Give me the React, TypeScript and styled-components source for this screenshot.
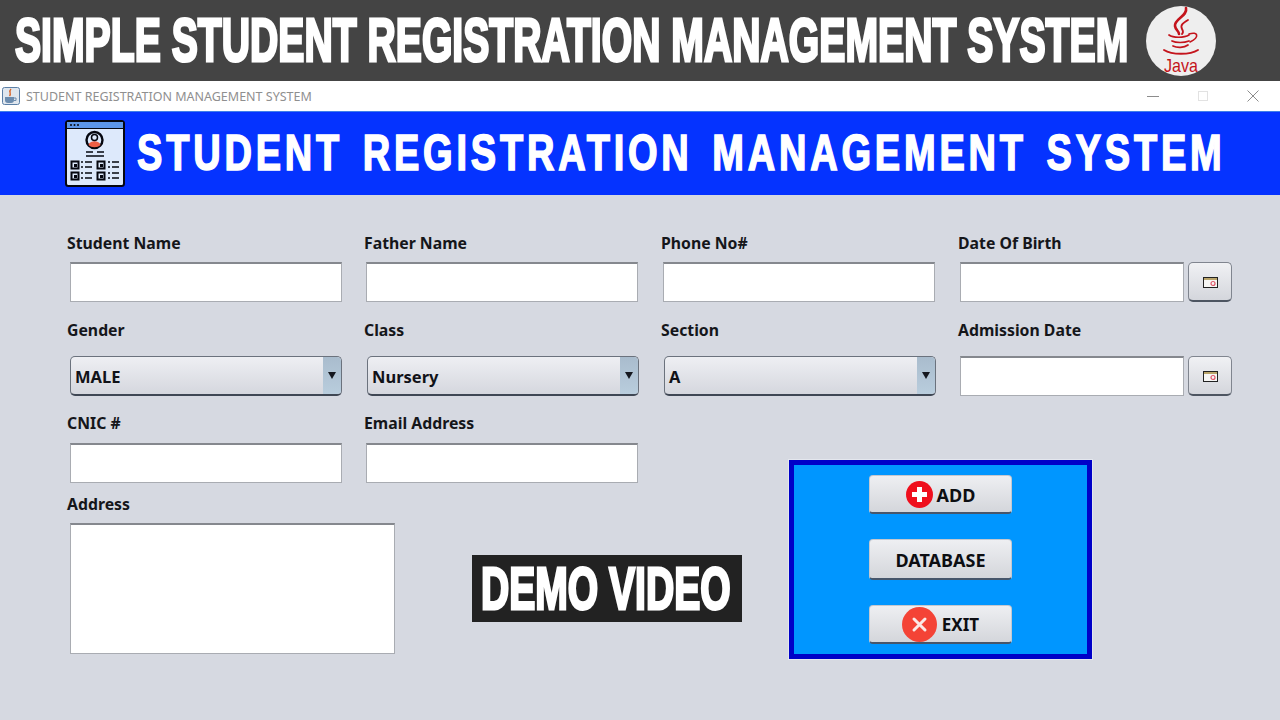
import styled, { createGlobalStyle } from 'styled-components';

const GlobalStyle = createGlobalStyle`
  html, body {
    margin: 0;
    padding: 0;
    background: #d6d9e1;
  }
  * {
    box-sizing: border-box;
  }
`;

const Page = styled.div`
  width: 1280px;
  height: 720px;
  overflow: hidden;
  display: flex;
  flex-direction: column;
  background: #d6d9e1;
  font-family: 'Noto Sans', 'Open Sans', sans-serif;
`;

const Banner = styled.header`
  height: 81px;
  flex: none;
  background: #444444;
  display: flex;
  align-items: center;
  padding-left: 15px;
  gap: 15px;
`;

const BannerTitle = styled.h1`
  margin: 0;
  width: 1116px;
  height: 81px;
  flex: none;
  font-family: 'Liberation Sans', sans-serif;
  font-size: 61px;
  line-height: 81px;
  font-weight: 700;
  color: #ffffff;
  white-space: nowrap;
  -webkit-text-stroke: 3px #ffffff;
`;

const Squeezed = styled.span<{ $scale: number }>`
  display: inline-block;
  transform: scaleX(${({ $scale }) => $scale});
  transform-origin: left center;
`;

const TitleBar = styled.div`
  height: 30px;
  flex: none;
  background: #ffffff;
  display: flex;
  align-items: center;
  padding-left: 2px;
`;

const WindowTitle = styled.span`
  margin-left: 6px;
  font-size: 12.5px;
  color: #8f8f8f;
  white-space: nowrap;
  flex: 1;
`;

const WindowControl = styled.span<{ $faded?: boolean }>`
  width: 50px;
  height: 30px;
  display: flex;
  align-items: center;
  justify-content: center;
  color: ${({ $faded }) => ($faded ? '#e2e2e2' : '#8c8c8c')};
`;

const AppHeader = styled.div`
  height: 84px;
  flex: none;
  background: #0533ff;
  border-top: 1px solid #3f7fe8;
  display: flex;
  align-items: center;
  padding-left: 65px;
  gap: 12px;
`;

const AppTitle = styled.h2`
  margin: 0;
  flex: 1;
  min-width: 0;
  font-family: 'Liberation Sans', sans-serif;
  font-size: 50px;
  line-height: 83px;
  font-weight: 700;
  color: #ffffff;
  white-space: nowrap;
  letter-spacing: 5px;
  word-spacing: 7px;
  -webkit-text-stroke: 1.6px #ffffff;
`;

const Form = styled.main`
  padding: 36px 0 0 67px;
  display: flex;
  flex-direction: column;
`;

const FieldRow = styled.div<{ $top?: number }>`
  display: grid;
  grid-template-columns: repeat(4, 297px);
  margin-top: ${({ $top }) => $top ?? 0}px;
`;

const Field = styled.div<{ $gap: number }>`
  display: flex;
  flex-direction: column;
  gap: ${({ $gap }) => $gap}px;
  padding-left: 2px;

  &:first-child {
    padding-left: 3px;
  }
`;

const Label = styled.label`
  font-size: 15.8px;
  line-height: 24px;
  font-weight: 700;
  color: #15161a;
  white-space: nowrap;
  margin-left: -2px;

  ${Field}:first-child > & {
    margin-left: -3px;
  }
`;

const TextBox = styled.div<{ $width?: number; $height?: number }>`
  width: ${({ $width }) => $width ?? 272}px;
  height: ${({ $height }) => $height ?? 40}px;
  background: #ffffff;
  border: 1px solid #a9acb2;
  border-top: 2px solid #85888e;
  flex: none;
`;

const DateRow = styled.div`
  display: flex;
  gap: 4px;
`;

const CalendarButton = styled.button`
  width: 44px;
  height: 40px;
  padding: 0;
  border: 1px solid #80858f;
  border-bottom: 2px solid #4d5561;
  border-radius: 5px;
  background: linear-gradient(#f0f1f4, #d4d6dc);
  display: flex;
  align-items: center;
  justify-content: center;
`;

const Select = styled.div`
  width: 272px;
  height: 40px;
  display: flex;
  border: 1px solid #6b727d;
  border-bottom: 2px solid #3f4754;
  border-radius: 5px;
  overflow: hidden;
  background: linear-gradient(#eeeff3, #d5d7de);

  ${Field}:not(:first-child) > & {
    margin-left: 1px;
  }
`;

const SelectValue = styled.span`
  flex: 1;
  padding: 5px 0 0 4px;
  font-size: 16.5px;
  line-height: 30px;
  font-weight: 700;
  color: #111218;
`;

const SelectArrow = styled.span`
  width: 18px;
  background: linear-gradient(#a9bccd, #b9cddd);
  display: flex;
  justify-content: center;
  padding-top: 15px;

  &::after {
    content: '';
    width: 0;
    height: 0;
    border-left: 4px solid transparent;
    border-right: 4px solid transparent;
    border-top: 7px solid #15181f;
  }
`;

const Lower = styled.div`
  display: flex;
  margin-top: 15px;
`;

const LowerLeft = styled.div`
  width: 722px;
  display: flex;
  flex-direction: column;
`;

const HalfRow = styled.div`
  display: grid;
  grid-template-columns: repeat(2, 297px);
`;

const AddressRow = styled.div`
  display: flex;
  margin-top: 9px;
`;

const DemoBadge = styled.div`
  width: 270px;
  height: 67px;
  flex: none;
  margin: 63px 0 0 77px;
  padding-left: 9px;
  background: #222222;
  color: #ffffff;
  font-family: 'Liberation Sans', sans-serif;
  font-size: 60px;
  line-height: 67px;
  font-weight: 700;
  white-space: nowrap;
  -webkit-text-stroke: 3px #ffffff;
`;

const ActionPanel = styled.section`
  width: 303px;
  height: 199px;
  margin-top: 49px;
  padding-top: 10px;
  background: #0096ff;
  border: 5px solid #0000c8;
  display: flex;
  flex-direction: column;
  align-items: center;
  gap: 25px;
  outline: 1px solid #e4e7ee;
`;

const ActionButton = styled.button<{ $height?: number; $gap?: number; $size?: number }>`
  width: 143px;
  height: ${({ $height }) => $height ?? 39}px;
  flex: none;
  padding: 1px 0 0;
  border: 1px solid #c5c8cf;
  border-bottom: 2px solid #47566b;
  border-radius: 4px;
  background: linear-gradient(#eeeff2, #d4d6db);
  display: flex;
  align-items: center;
  justify-content: center;
  gap: ${({ $gap }) => $gap ?? 4}px;
  font-family: 'Noto Sans', 'Open Sans', sans-serif;
  font-size: ${({ $size }) => $size ?? 18}px;
  font-weight: 700;
  color: #0d0e12;
`;

const JavaLogo = () => (
  <svg width="70" height="70" viewBox="0 0 70 70" style={{ flex: 'none' }}>
    <defs>
      <clipPath id="javaClip">
        <circle cx="35" cy="35" r="35" />
      </clipPath>
    </defs>
    <circle cx="35" cy="35" r="35" fill="#eeeeee" />
    <g clipPath="url(#javaClip)" fill="none" stroke="#c4141c" strokeLinecap="round">
      <path d="M40 2 C42 10 28 13 29 20 C29.5 24 33 25 33 28" strokeWidth="2.6" />
      <path d="M42 14 C37 17 34 19 36 23 C37 25 38 26 36 28" strokeWidth="1.8" />
      <path d="M23 29 C27 32 38 32 43 29" strokeWidth="1.7" />
      <path d="M26 35 C30 37 38 37 43 35" strokeWidth="1.7" />
      <path d="M27 40 C31 42 38 42 42 39" strokeWidth="1.7" />
      <path d="M43 28 C52 25 54 31 44 36" strokeWidth="1.6" />
      <path d="M18 44 C26 49 44 49 52 44" strokeWidth="1.9" />
      <text
        x="35"
        y="66"
        textAnchor="middle"
        fontFamily="'Liberation Sans', sans-serif"
        fontSize="19"
        textLength="34"
        lengthAdjust="spacingAndGlyphs"
        fill="#c4141c"
        stroke="none"
      >
        Java
      </text>
    </g>
  </svg>
);

const AppIcon = () => (
  <svg width="18" height="18" viewBox="0 0 18 18" style={{ flex: 'none' }}>
    <rect x="0.5" y="0.5" width="17" height="17" rx="2" fill="#dfe6ee" stroke="#5b7fa6" />
    <path d="M3 10h9v3a3 3 0 0 1-3 3H6a3 3 0 0 1-3-3z" fill="#6c8cae" />
    <path d="M12 11h2v2.5h-2" fill="none" stroke="#6c8cae" />
    <path d="M9 2 C6 5 10 6 7.5 9" fill="none" stroke="#d9662b" strokeWidth="1.4" />
  </svg>
);

const StudentIcon = () => (
  <svg width="60" height="67" viewBox="0 0 60 67" style={{ flex: 'none' }}>
    <rect x="1" y="1" width="58" height="65" rx="2.5" fill="#dde9fb" stroke="#05070f" strokeWidth="2" />
    <rect x="2" y="2" width="56" height="6" fill="#5c96e8" />
    <path d="M2 8.500h56" stroke="#05070f" />
    <circle cx="6" cy="5" r="1" fill="#05070f" />
    <circle cx="9.5" cy="5" r="1" fill="#05070f" />
    <circle cx="13" cy="5" r="1" fill="#05070f" />
    <circle cx="29.5" cy="20" r="8" fill="#dde9fb" stroke="#05070f" strokeWidth="2.4" />
    <path d="M23.5 25 C24.5 20 34.5 20 35.5 25 C32.5 28 26.5 28 23.5 25z" fill="#ef5f45" />
    <circle cx="29.5" cy="17.5" r="3" fill="none" stroke="#05070f" strokeWidth="1.5" />
    <g stroke="#05070f" strokeWidth="1.6" fill="none">
      <path d="M21 32h7M32 32h7M21 36h18" />
      <path d="M6.5 41.5h7v7h-7zM32.5 41.5h7v7h-7zM6.5 52.5h7v7h-7zM32.5 52.5h7v7h-7z" strokeWidth="2" />
      <path d="M16 42h2M20 42h7M16 47h2M20 47h7M43 42h2M47 42h7M43 47h2M47 47h7" />
      <path d="M16 53h2M20 53h7M16 58h2M20 58h7M43 53h2M47 53h7M43 58h2M47 58h7" />
    </g>
    <g fill="#05070f">
      <rect x="9" y="44" width="3" height="3" />
      <rect x="35" y="44" width="3" height="3" />
      <rect x="9" y="55" width="3" height="3" />
      <rect x="35" y="55" width="3" height="3" />
    </g>
  </svg>
);

const CalendarIcon = () => (
  <svg width="15" height="12" viewBox="0 0 15 12">
    <rect x="0.5" y="1.5" width="14" height="10" fill="#f6f6f4" stroke="#222222" />
    <rect x="1" y="2" width="13" height="2" fill="#b9a46a" />
    <circle cx="10" cy="7.5" r="2" fill="none" stroke="#e0566a" strokeWidth="1.2" />
  </svg>
);

const PlusIcon = () => (
  <svg width="27" height="27" viewBox="0 0 27 27" style={{ flex: 'none' }}>
    <circle cx="13.5" cy="13.5" r="13.5" fill="#ef0f1d" />
    <path d="M11 6h5v5h5v5h-5v5h-5v-5H6v-5h5z" fill="#ffffff" />
  </svg>
);

const CloseIcon = () => (
  <svg width="35" height="35" viewBox="0 0 35 35" style={{ flex: 'none' }}>
    <circle cx="17.5" cy="17.5" r="17.5" fill="#f44336" />
    <path d="M12 12l11 11M23 12L12 23" stroke="#fbe9e7" strokeWidth="3" strokeLinecap="round" />
  </svg>
);

const DateInput = () => (
  <DateRow>
    <TextBox $width={224} />
    <CalendarButton aria-label="Pick date">
      <CalendarIcon />
    </CalendarButton>
  </DateRow>
);

const Dropdown = ({ value }: { value: string }) => (
  <Select>
    <SelectValue>{value}</SelectValue>
    <SelectArrow />
  </Select>
);

export default function App() {
  return (
    <Page>
      <GlobalStyle />
      <Banner>
        <BannerTitle>
          <Squeezed $scale={0.642}>SIMPLE STUDENT REGISTRATION MANAGEMENT SYSTEM</Squeezed>
        </BannerTitle>
        <JavaLogo />
      </Banner>

      <TitleBar>
        <AppIcon />
        <WindowTitle>STUDENT REGISTRATION MANAGEMENT SYSTEM</WindowTitle>
        <WindowControl>
          <svg width="12" height="12" viewBox="0 0 12 12">
            <path d="M0 6.5h12" stroke="currentColor" />
          </svg>
        </WindowControl>
        <WindowControl $faded>
          <svg width="12" height="12" viewBox="0 0 12 12">
            <rect x="1.5" y="1.5" width="9" height="9" fill="none" stroke="currentColor" />
          </svg>
        </WindowControl>
        <WindowControl>
          <svg width="12" height="12" viewBox="0 0 12 12">
            <path d="M0.5 0.5l11 11M11.5 0.5l-11 11" stroke="currentColor" />
          </svg>
        </WindowControl>
        <span style={{ width: 2 }} />
      </TitleBar>

      <AppHeader>
        <StudentIcon />
        <AppTitle>
          <Squeezed $scale={0.76}>STUDENT REGISTRATION MANAGEMENT SYSTEM</Squeezed>
        </AppTitle>
      </AppHeader>

      <Form>
        <FieldRow>
          <Field $gap={7}>
            <Label>Student Name</Label>
            <TextBox />
          </Field>
          <Field $gap={7}>
            <Label>Father Name</Label>
            <TextBox />
          </Field>
          <Field $gap={7}>
            <Label>Phone No#</Label>
            <TextBox />
          </Field>
          <Field $gap={7}>
            <Label>Date Of Birth</Label>
            <DateInput />
          </Field>
        </FieldRow>

        <FieldRow $top={16}>
          <Field $gap={14}>
            <Label>Gender</Label>
            <Dropdown value="MALE" />
          </Field>
          <Field $gap={14}>
            <Label>Class</Label>
            <Dropdown value="Nursery" />
          </Field>
          <Field $gap={14}>
            <Label>Section</Label>
            <Dropdown value="A" />
          </Field>
          <Field $gap={14}>
            <Label>Admission Date</Label>
            <DateInput />
          </Field>
        </FieldRow>

        <Lower>
          <LowerLeft>
            <HalfRow>
              <Field $gap={8}>
                <Label>CNIC #</Label>
                <TextBox />
              </Field>
              <Field $gap={8}>
                <Label>Email Address</Label>
                <TextBox />
              </Field>
            </HalfRow>
            <AddressRow>
              <Field $gap={7}>
                <Label>Address</Label>
                <TextBox $width={325} $height={131} />
              </Field>
              <DemoBadge>
                <Squeezed $scale={0.651}>DEMO VIDEO</Squeezed>
              </DemoBadge>
            </AddressRow>
          </LowerLeft>

          <ActionPanel>
            <ActionButton $gap={4}>
              <PlusIcon />
              ADD
            </ActionButton>
            <ActionButton $height={41}>DATABASE</ActionButton>
            <ActionButton $gap={5} $size={17}>
              <CloseIcon />
              EXIT
            </ActionButton>
          </ActionPanel>
        </Lower>
      </Form>
    </Page>
  );
}
